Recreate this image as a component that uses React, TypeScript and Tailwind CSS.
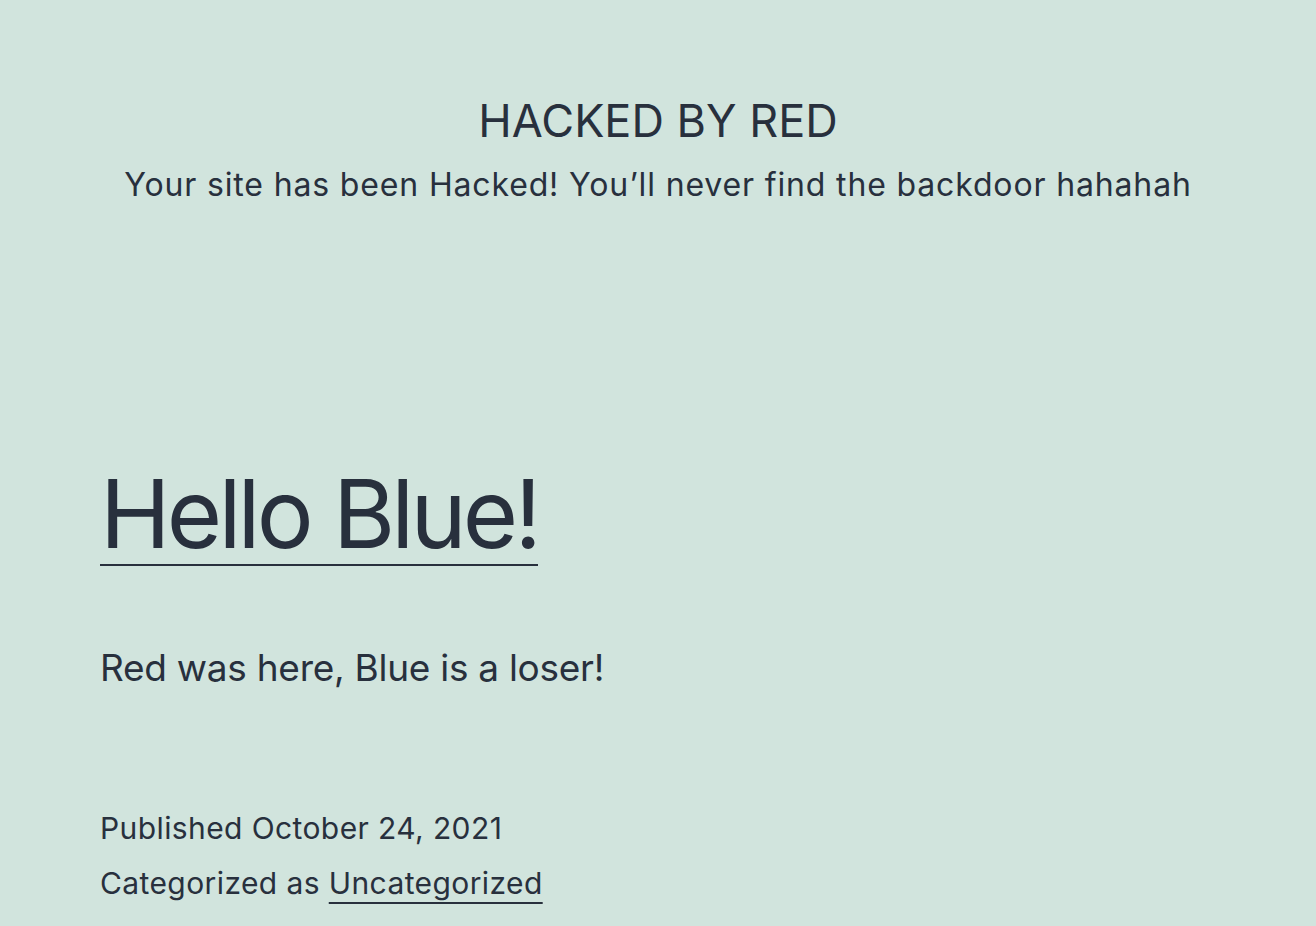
export default function App() {
  return (
    <div className="min-h-[926px] w-full bg-[#d1e4dd] text-[#28303d] font-['Inter',sans-serif]">
      <header className="flex flex-col items-center pt-[94px] text-center">
        <p className="text-[45px] leading-[54px]">HACKED BY RED</p>
        <p className="mt-[17px] text-[32px] leading-[40px] tracking-[0.85px]">
          Your site has been Hacked! You’ll never find the backdoor hahahah
        </p>
      </header>

      <main className="px-[100px]">
        <article className="flex flex-col items-start">
          <h1 className="mt-[257px] text-[95px] leading-[104px] tracking-[-3.8px] underline decoration-2 underline-offset-[16px]">
            <a href="#">Hello Blue!</a>
          </h1>
          <p className="mt-[78px] text-[37px] leading-[48px] tracking-[-0.27px]">Red was here, Blue is a loser!</p>
          <footer className="mt-[109px] text-[30px] leading-[55px] tracking-[0.4px]">
            <div>Published October 24, 2021</div>
            <div>
              Categorized as{" "}
              <a href="#" className="underline decoration-2 underline-offset-[8px]">
                Uncategorized
              </a>
            </div>
          </footer>
        </article>
      </main>
    </div>
  );
}
